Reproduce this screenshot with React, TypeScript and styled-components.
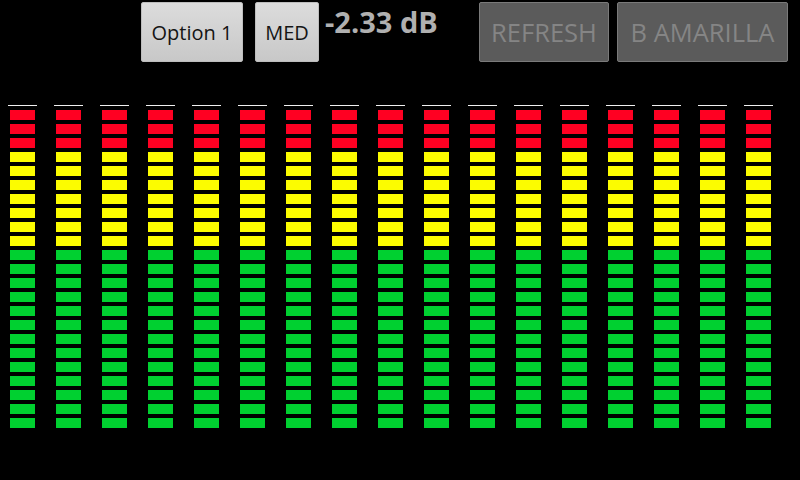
import styled, { createGlobalStyle } from "styled-components";

const GlobalStyle = createGlobalStyle`
  html, body {
    margin: 0;
    padding: 0;
    background: #000;
    font-family: "Open Sans", "DejaVu Sans", sans-serif;
  }
`;

const Screen = styled.div`
  width: 800px;
  height: 480px;
  background: #000;
  overflow: hidden;
`;

const TopBar = styled.div`
  display: flex;
  align-items: flex-start;
  height: 64px;
  padding: 2px 12px 0 141px;
  box-sizing: border-box;
`;

const Button = styled.div<{ $w: number; $disabled?: boolean; $gap?: number }>`
  display: flex;
  align-items: center;
  justify-content: center;
  width: ${(p) => p.$w}px;
  height: 60px;
  box-sizing: border-box;
  margin-left: ${(p) => p.$gap ?? 0}px;
  border-radius: 2px;
  border: 1px solid ${(p) => (p.$disabled ? "#7a7a7a" : "#bdbdbd")};
  background: ${(p) =>
    p.$disabled
      ? "#5b5b5b"
      : "linear-gradient(#dcdcdc, #d2d2d2 50%, #c8c8c8)"};
  color: ${(p) => (p.$disabled ? "#858585" : "#141414")};
  font-size: ${(p) => (p.$disabled ? 25.5 : 20)}px;
  white-space: nowrap;
`;

const Level = styled.div`
  margin: 0 0 0 6px;
  font-size: 29px;
  font-weight: 700;
  color: #b0b0b0;
  white-space: nowrap;
`;

const Spacer = styled.div`
  flex: 1;
`;

const Meters = styled.div`
  display: flex;
  gap: 17px;
  padding: 41px 0 0 8px;
`;

const Column = styled.div`
  display: flex;
  flex-direction: column;
  align-items: center;
  width: 29px;
`;

const Peak = styled.div`
  width: 29px;
  height: 1px;
  background: #f0f0f0;
  margin-bottom: 4px;
`;

const Segments = styled.div`
  display: flex;
  flex-direction: column;
  gap: 4px;
`;

const Segment = styled.div<{ $color: string }>`
  width: 25px;
  height: 10px;
  background: ${(p) => p.$color};
`;

const RED = "#ff0022";
const YELLOW = "#fcfc00";
const GREEN = "#00d030";

const segmentColors = [
  ...Array(3).fill(RED),
  ...Array(7).fill(YELLOW),
  ...Array(13).fill(GREEN),
];

export default function App() {
  return (
    <Screen>
      <GlobalStyle />
      <TopBar>
        <Button $w={102}>Option 1</Button>
        <Button $w={64} $gap={12}>
          MED
        </Button>
        <Level>-2.33 dB</Level>
        <Spacer />
        <Button $w={130} $disabled>
          REFRESH
        </Button>
        <Button $w={171} $gap={8} $disabled>
          B AMARILLA
        </Button>
      </TopBar>
      <Meters>
        {Array.from({ length: 17 }).map((_, i) => (
          <Column key={i}>
            <Peak />
            <Segments>
              {segmentColors.map((c, j) => (
                <Segment key={j} $color={c} />
              ))}
            </Segments>
          </Column>
        ))}
      </Meters>
    </Screen>
  );
}
